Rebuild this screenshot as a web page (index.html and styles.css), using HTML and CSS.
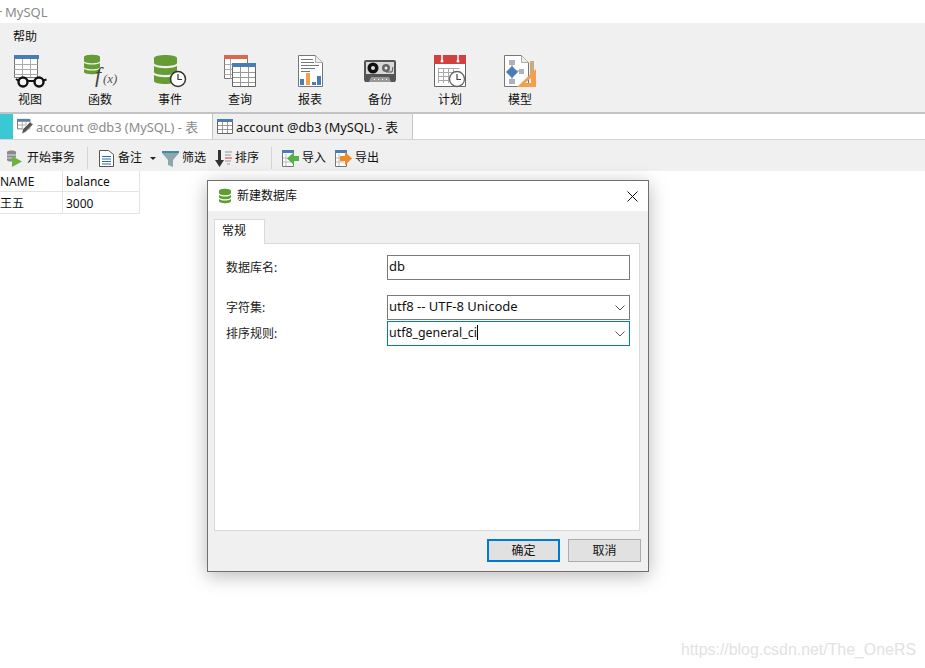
FILE: index.html
```html
<!DOCTYPE html>
<html lang="zh">
<head>
<meta charset="utf-8">
<title>MySQL</title>
<link rel="stylesheet" href="styles.css">
</head>
<body>
<div class="titlebar"><i class="title-mark"></i>MySQL</div>
<div class="ribbon">
  <div class="menu">帮助</div>
  <div class="tools">
    <div class="tool">
      <svg class="ticon" viewBox="0 0 34 34"><path d="M1.500 1.500h23v22h-23z" fill="#fff" stroke="#777"/><path d="M1 1h25v4H1z" fill="#4a7db5"/><path d="M1.500 10.500h23M1.500 15.500h23M1.500 20.500h23M9.500 5v18M17.500 5v18" stroke="#aaa"/><circle cx="10" cy="28" r="4.500" fill="#f4f4f4" stroke="#111" stroke-width="2.400"/><circle cx="26" cy="28" r="4.500" fill="#f4f4f4" stroke="#111" stroke-width="2.400"/><path d="M3 25l3 2M14 27h8M30 26.500l3.500-1" stroke="#111" stroke-width="2" fill="none"/></svg>
      <span>视图</span>
    </div>
    <div class="tool">
      <svg class="ticon" viewBox="0 0 34 34"><path d="M1 3c0-3 16-3 16 0v4c0 3-16 3-16 0zM1 9c4 2 12 2 16 0v4c0 3-16 3-16 0zM1 15c4 2 12 2 16 0v3c0 3-16 3-16 0z" fill="#669c35"/><text x="12" y="28" class="fx">f</text><text x="20" y="29" class="fxs">(x)</text></svg>
      <span>函数</span>
    </div>
    <div class="tool">
      <svg class="ticon" viewBox="0 0 34 34"><path d="M1 4c0-4 23-4 23 0v5c0 4-23 4-23 0zM1 12c5 3 18 3 23 0v6c0 4-23 4-23 0zM1 21c5 3 18 3 23 0v6c0 4-23 4-23 0z" fill="#669c35"/><circle cx="25" cy="25" r="7.500" fill="#fff" stroke="#333" stroke-width="1.500"/><path d="M25 20v5.500h4" fill="none" stroke="#333" stroke-width="1.200"/></svg>
      <span>事件</span>
    </div>
    <div class="tool">
      <svg class="ticon" viewBox="0 0 34 34"><path d="M1.500 1.500h23v23h-23z" fill="#fff" stroke="#777"/><path d="M1 1h24v4H1z" fill="#d9694a"/><path d="M1.500 10.500h8M1.500 15.500h8M1.500 20.500h8M7.500 5v20" stroke="#aaa"/><path d="M9.500 9.500h23v23h-23z" fill="#fff" stroke="#666"/><path d="M9 9h24v4H9z" fill="#4a7db5"/><path d="M10 18.500h22M10 23.500h22M10 28.500h22M17.500 13v19M25.500 13v19" stroke="#999"/></svg>
      <span>查询</span>
    </div>
    <div class="tool">
      <svg class="ticon" viewBox="0 0 34 34"><path d="M5.500 1.500h17l7 7v24h-24z" fill="#fff" stroke="#777"/><path d="M22.500 1.500v7h7" fill="#eee" stroke="#aaa"/><path d="M8 5.500h12M8 8.500h13M8 11.500h18M8 14.500h14M8 17.500h9" stroke="#777"/><path d="M7 25h4v6H7z" fill="#4a7db5"/><path d="M13 19h4v12h-4z" fill="#f2a04e"/><path d="M19 28h4v3h-4z" fill="#4a7db5"/><path d="M24 22h4v9h-4z" fill="#4a7db5"/></svg>
      <span>报表</span>
    </div>
    <div class="tool">
      <svg class="ticon" viewBox="0 0 34 34"><path d="M1 8q0-2 2-2h28q2 0 2 2v18l-1 2H2l-1-2z" fill="#555"/><path d="M3 8h28v12H3z" fill="#d8d8d8"/><circle cx="10" cy="14" r="5.500" fill="#111"/><circle cx="10" cy="14" r="2" fill="#ddd"/><circle cx="23" cy="14" r="4" fill="#666"/><circle cx="23" cy="14" r="1.500" fill="#eee"/><path d="M23 18h6l1-5" fill="none" stroke="#555"/><path d="M6 28l2-5h18l2 5z" fill="#999"/><path d="M11 25.500h1M15 25.500h1M19 25.500h1M23 25.500h1" stroke="#fff"/></svg>
      <span>备份</span>
    </div>
    <div class="tool">
      <svg class="ticon" viewBox="0 0 34 34"><path d="M1.500 1.500h31v31h-31z" fill="#fff" stroke="#666"/><path d="M1 1h32v9H1z" fill="#d13f3f"/><path d="M9 1v6M25 1v6" stroke="#fff" stroke-width="1.500"/><circle cx="9" cy="7" r="1.500" fill="#fff"/><circle cx="25" cy="7" r="1.500" fill="#fff"/><path d="M5.500 14.500h21M5.500 18.500h21M5.500 22.500h21M5.500 26.500h17M5.500 14v15M10.500 14v15M15.500 14v15M20.500 14v15" stroke="#aaa"/><circle cx="24" cy="25" r="7.500" fill="#fff" stroke="#666" stroke-width="1.300"/><path d="M24 20v5.500h4" fill="none" stroke="#444" stroke-width="1.200"/></svg>
      <span>计划</span>
    </div>
    <div class="tool">
      <svg class="ticon" viewBox="0 0 34 34"><path d="M1.500 1.500h17l7 7v24h-24z" fill="#fff" stroke="#777"/><path d="M18.500 1.500v7h7" fill="#eee" stroke="#aaa"/><path d="M6 6h6v5H6zM6 25h6v5H6z" fill="#a9b4c0"/><path d="M9 11v14M9 17h10" stroke="#999"/><path d="M9 12l6 6-6 6-6-6z" fill="#4a7db5"/><path d="M16 15h5v5h-5z" fill="#a9b4c0"/><path d="M27 7h4v15h-4z" fill="#c9ab7c"/><path d="M33 15v18H14zM28 24l-6 5h6z" fill="#f2a04e" fill-rule="evenodd"/></svg>
      <span>模型</span>
    </div>
  </div>
</div>
<div class="tabs">
  <div class="tab-mark"></div>
  <div class="tab tab-idle">
    <svg class="ico" viewBox="0 0 18 18"><path d="M.500 1.500h13v10H.500z" fill="#fff" stroke="#777"/><path d="M0 1h14v3H0z" fill="#5f7f9e"/><path d="M5.500 4v7M9.500 4v4M1 7.500h8" stroke="#aaa"/><path d="M5 17l1-5 8-8 3 3-8 8z" fill="#555" stroke="#f6f6f6" stroke-width=".8"/></svg>
    <span>account @db3 (MySQL) - 表</span>
  </div>
  <div class="tab tab-active">
    <svg class="ico" viewBox="0 0 17 17"><path d="M.500 1.500h15v14H.500z" fill="#fff" stroke="#666"/><path d="M0 1h16v3H0z" fill="#4a7db5"/><path d="M1 7.500h14M1 11.500h14M5.500 4v11M10.500 4v11" stroke="#999"/></svg>
    <span>account @db3 (MySQL) - 表</span>
  </div>
</div>
<div class="toolbar">
  <svg class="ico" viewBox="0 0 17 17"><path d="M1 2c0-2 9-2 9 0v8c0 2-9 2-9 0z" fill="#8a8a8a"/><path d="M1 5h9M1 8h9" stroke="#ddd"/><path d="M6 6l10 5.500L6 17z" fill="#6db33f"/></svg>
  <span class="lbl l-first">开始事务</span>
  <i class="sep"></i>
  <svg class="ico" viewBox="0 0 17 17"><path d="M.500.500h9l5 4v12h-14z" fill="#fff" stroke="#555"/><path d="M3 6.500h9M3 9h9M3 11.500h9M3 14h9" stroke="#2e6da4"/></svg>
  <span class="lbl l-note">备注</span>
  <i class="caret"></i>
  <svg class="ico" viewBox="0 0 17 17"><path d="M0 1h17v2H0z" fill="#3c8fa0"/><path d="M0 3h17l-6 7v7l-5-2v-5z" fill="#8fa6ad"/></svg>
  <span class="lbl">筛选</span>
  <svg class="ico i-gap" viewBox="0 0 17 17"><path d="M3 0h3v10h3l-4.500 7L0 10h3z" fill="#333"/><path d="M10 2h7M10 5h6M10 11h6M12 14h3" stroke="#8a9a9a"/><path d="M10 8h7" stroke="#d33"/></svg>
  <span class="lbl">排序</span>
  <i class="sep sep-2"></i>
  <svg class="ico" viewBox="0 0 17 17"><path d="M.500.500h11v16H.500z" fill="#fff" stroke="#777"/><path d="M0 0h12v3H0z" fill="#4a7db5"/><path d="M4 4v12M1 8h8M1 12h8" stroke="#bbb"/><path d="M17 6h-5V2L5 8.500l7 6.500v-4h5z" fill="#55b04a"/></svg>
  <span class="lbl">导入</span>
  <svg class="ico i-gap" viewBox="0 0 17 17"><path d="M.500.500h11v16H.500z" fill="#fff" stroke="#777"/><path d="M0 0h12v3H0z" fill="#4a7db5"/><path d="M4 4v12M1 8h8M1 12h8" stroke="#bbb"/><path d="M5 6h5V2l7 6.500-7 6.500v-4H5z" fill="#f08a24"/></svg>
  <span class="lbl">导出</span>
</div>
<div class="grid">
  <div class="cell c-name">NAME</div><div class="cell c-bal">balance</div>
  <div class="cell c-name row-2">王五</div><div class="cell c-bal row-2">3000</div>
</div>

<section class="dialog">
  <header class="dlg-title">
    <svg class="dlg-icon" viewBox="0 0 14 16"><path d="M1 3c0-3 12-3 12 0v2c0 3-12 3-12 0zM1 7c3 2 9 2 12 0v2c0 3-12 3-12 0zM1 11c3 2 9 2 12 0v2c0 3-12 3-12 0z" fill="#5f9e2e"/></svg>
    <span>新建数据库</span>
    <svg class="dlg-close" viewBox="0 0 11 11"><path d="M.500.500l10 10M10.500.500l-10 10" stroke="#111" fill="none"/></svg>
  </header>
  <div class="dlg-body">
    <div class="dlg-tab">常规</div>
    <div class="panel">
      <div class="row r-name"><label>数据库名:</label><div class="field">db</div></div>
      <div class="row r-charset"><label>字符集:</label><div class="field">utf8 -- UTF-8 Unicode<svg class="chev" viewBox="0 0 10 6"><path d="M.500.500L5 5 9.500.500" fill="none" stroke="#555"/></svg></div></div>
      <div class="row r-coll"><label>排序规则:</label><div class="field focus"><span>utf8_general_ci</span><b class="cursor"></b><svg class="chev" viewBox="0 0 10 6"><path d="M.500.500L5 5 9.500.500" fill="none" stroke="#555"/></svg></div></div>
    </div>
    <div class="actions">
      <button class="btn primary">确定</button>
      <button class="btn">取消</button>
    </div>
  </div>
</section>
<div class="watermark">https://blog.csdn.net/The_OneRS</div>
</body>
</html>
```
FILE: styles.css
```css
* { box-sizing: border-box; }
html, body { margin: 0; padding: 0; }
body {
  width: 925px;
  height: 668px;
  overflow: hidden;
  position: relative;
  background: #fff;
  color: #111;
  font: 12px/16px "Noto Sans", "Noto Sans CJK SC", sans-serif;
}
.titlebar {
  height: 23px;
  display: flex;
  align-items: center;
  font-size: 13px;
  color: #8a8a8a;
}
.title-mark { width: 2px; height: 1px; margin-right: 3px; background: #8a8a8a; }
.ribbon {
  height: 91px;
  background: #f0f0f0;
  border-bottom: 2px solid #c4c4c4;
}
.menu { padding: 6px 0 0 13px; height: 30px; }
.tools { display: flex; margin-left: -5px; margin-top: 1px; }
.tool { width: 70px; display: flex; flex-direction: column; align-items: center; }
.ticon { width: 34px; height: 34px; display: block; overflow: visible; }
.tool span { margin-top: 4px; }
.fx { font: italic 22px "Liberation Serif", serif; fill: #444; }
.fxs { font: italic 13px "Liberation Serif", serif; fill: #555; }

.tabs { display: flex; height: 26px; border-bottom: 1px solid #d4d4d4; }
.tab-mark { width: 13px; background: #3ac8d4; }
.tab {
  width: 200px;
  display: flex;
  align-items: center;
  gap: 2px;
  padding-left: 4px;
  font-size: 12.8px;
  white-space: nowrap;
  border-right: 1px solid #c4c4c4;
}
.tab-idle { color: #8a8a8a; }
.tab-active { background: #f0f0f0; }
.ico { width: 17px; height: 17px; display: block; flex: none; }

.toolbar {
  height: 31px;
  padding: 5px 0 0 6px;
  background: #f0f0f0;
  display: flex;
  align-items: center;
}
.lbl { margin-left: 3px; white-space: nowrap; }
.l-first { margin-left: 4px; }
.l-note { margin-left: 2px; }
.sep { width: 1px; height: 22px; background: #d5d5d5; margin: 0 11px 0 12px; }
.sep-2 { margin-right: 10px; }
.caret {
  width: 0; height: 0;
  margin: 1px 6px 0 8px;
  border: 3px solid transparent;
  border-top: 3px solid #222;
  border-bottom: 0;
}
.i-gap { margin-left: 9px; }

.grid {
  display: grid;
  grid-template-columns: 63px 77px;
  grid-template-rows: 21px 22px;
  width: 140px;
}
.cell {
  border-right: 1px solid #e3e3e3;
  border-bottom: 1px solid #e3e3e3;
  line-height: 21px;
  padding-left: 3px;
}
.c-name { padding-left: 0; }
.row-2 { padding-top: 1px; }

.dialog {
  position: absolute;
  left: 207px;
  top: 180px;
  width: 442px;
  height: 392px;
  background: #f0f0f0;
  border: 1px solid #6f6f6f;
  box-shadow: 0 4px 18px rgba(0, 0, 0, .28);
  display: flex;
  flex-direction: column;
}
.dlg-title {
  height: 30px;
  background: #fff;
  display: flex;
  align-items: center;
  padding: 0 10px;
  flex: none;
}
.dlg-icon { width: 14px; height: 16px; margin-right: 5px; }
.dlg-close { width: 11px; height: 11px; margin-left: auto; }
.dlg-body { flex: 1; padding: 8px 8px 9px 6px; display: flex; flex-direction: column; }
.dlg-tab {
  width: 51px;
  height: 25px;
  margin-bottom: -1px;
  padding: 3px 0 0 7px;
  background: #fff;
  border: 1px solid #d9d9d9;
  border-bottom: 0;
  position: relative;
  z-index: 1;
}
.panel {
  height: 288px;
  background: #fff;
  border: 1px solid #d9d9d9;
  padding: 11px 9px 0 11px;
}
.row { display: flex; align-items: center; height: 25px; }
.r-charset { margin-top: 15px; }
.r-coll { margin-top: 1px; }
.row label { width: 161px; color: #222; }
.field {
  width: 243px;
  height: 25px;
  border: 1px solid #7a7a7a;
  padding: 0 0 2px 1px;
  font-size: 13px;
  line-height: 21px;
  display: flex;
  align-items: center;
  position: relative;
}
.focus { border-color: #0078d7; font-size: 12.4px; }
.cursor { width: 1px; height: 15px; background: #000; }
.chev { position: absolute; right: 4px; top: 9px; width: 10px; height: 6px; }
.actions { display: flex; justify-content: flex-end; gap: 8px; margin-top: 8px; margin-right: -1px; }
.btn {
  width: 73px;
  height: 23px;
  padding: 0;
  background: #e1e1e1;
  border: 1px solid #adadad;
  color: #111;
  font: inherit;
}
.primary { border: 2px solid #0078d7; }
.watermark {
  position: absolute;
  right: 9px;
  top: 640px;
  font: 15.9px/20px "Liberation Sans", sans-serif;
  color: #e2e2e2;
}
```
